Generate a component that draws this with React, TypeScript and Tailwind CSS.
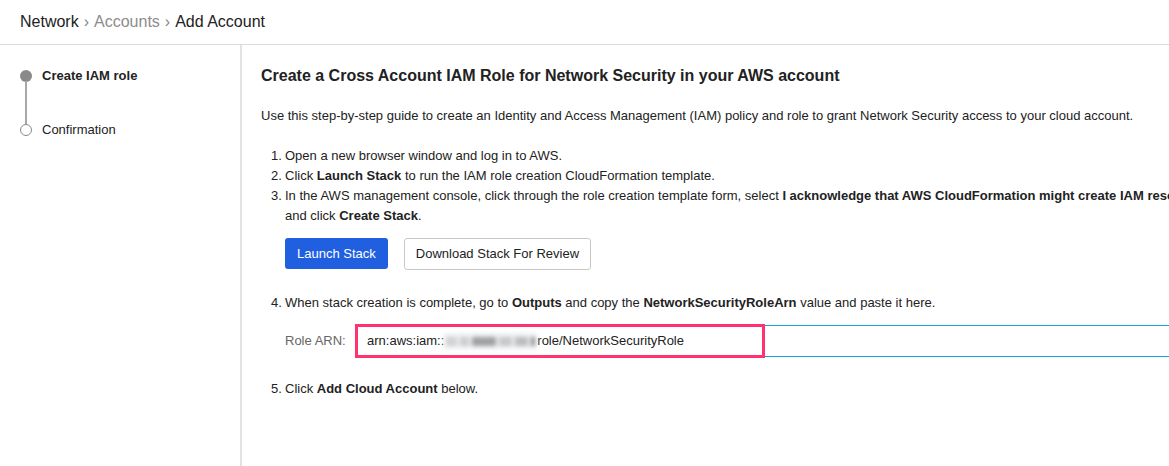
import React from 'react';

const FONT = { fontFamily: '"Liberation Sans", Arial, sans-serif' };

function Steps() {
  return (
    <div className="w-[242px] shrink-0 border-r-2 border-[#e2e2e2]">
      <div className="relative pl-[20px] pt-[25px]">
        {/* line between steps */}
        <div className="absolute left-[25px] top-[36px] w-[2px] h-[50px] bg-[#a8a8a8]" />
        <div className="flex items-center gap-[10px] h-[12px]">
          <span className="w-[12px] h-[12px] rounded-full bg-[#8a8a8a] shrink-0" />
          <span className="text-[13px] font-bold text-[#222]">Create IAM role</span>
        </div>
        <div className="flex items-center gap-[10px] h-[12px] mt-[42px]">
          <span className="w-[12px] h-[12px] rounded-full border-[1.5px] border-[#8a8a8a] bg-white shrink-0 relative z-10" />
          <span className="text-[13px] text-[#222]">Confirmation</span>
        </div>
      </div>
    </div>
  );
}

function Blurred() {
  return (
    <span className="inline-flex items-center w-[93px] h-[16px] align-middle bg-[#eef0f2] blur-[2px] gap-[3px] px-[2px]">
      <span className="h-[9px] w-[12px] bg-[#d2d2d2]" />
      <span className="h-[9px] w-[10px] bg-[#cdcdcd]" />
      <span className="h-[9px] w-[26px] bg-[#a0a0a0]" />
      <span className="h-[9px] w-[14px] bg-[#c8c8c8]" />
      <span className="h-[9px] w-[14px] bg-[#bcbcbc]" />
      <span className="h-[9px] w-[5px] bg-[#909090]" />
    </span>
  );
}

export default function App() {
  return (
    <div className="w-full h-screen overflow-hidden bg-white text-[#222]" style={FONT}>
      {/* breadcrumb */}
      <div className="h-[45px] border-b border-[#dcdcdc] flex items-center pl-[20px] text-[16px]">
        <span className="text-[#222]">Network</span>
        <span className="text-[#888] mx-[5px]">›</span>
        <span className="text-[#8c8c8c]">Accounts</span>
        <span className="text-[#888] mx-[5px]">›</span>
        <span className="text-[#222]">Add Account</span>
      </div>

      <div className="flex h-[421px]">
        <Steps />

        <div className="flex-1 pl-[19px] pt-[21px] min-w-0 text-[13px] leading-[20px]">
          <h1 className="text-[16px] font-bold leading-[20px] whitespace-nowrap">
            Create a Cross Account IAM Role for Network Security in your AWS account
          </h1>
          <p className="mt-[20px] whitespace-nowrap">
            Use this step-by-step guide to create an Identity and Access Management (IAM) policy and role to grant Network Security access to your cloud account.
          </p>

          <ol className="mt-[20px] pl-[10px]">
            <li className="flex">
              <span className="w-[14px] shrink-0">1.</span>
              <span>Open a new browser window and log in to AWS.</span>
            </li>
            <li className="flex">
              <span className="w-[14px] shrink-0">2.</span>
              <span>Click <b>Launch Stack</b> to run the IAM role creation CloudFormation template.</span>
            </li>
            <li className="flex">
              <span className="w-[14px] shrink-0">3.</span>
              <span className="whitespace-nowrap">
                In the AWS management console, click through the role creation template form, select <b>I acknowledge that AWS CloudFormation might create IAM resources.</b>
                <br />
                and click <b>Create Stack</b>.
              </span>
            </li>
          </ol>

          <div className="flex gap-[16px] mt-[12px] pl-[24px]">
            <button className="h-[31px] px-[12px] rounded-[3px] bg-[#1f5fe0] text-white text-[13px]">
              Launch Stack
            </button>
            <button className="h-[32px] px-[11px] rounded-[3px] border border-[#c8c8c8] bg-white text-[#222] text-[13px]">
              Download Stack For Review
            </button>
          </div>

          <div className="flex mt-[23px] pl-[10px]">
            <span className="w-[14px] shrink-0">4.</span>
            <span>When stack creation is complete, go to <b>Outputs</b> and copy the <b>NetworkSecurityRoleArn</b> value and paste it here.</span>
          </div>

          <div className="flex items-center mt-[12px] pl-[24px]">
            <span className="w-[71px] shrink-0 text-[#666]">Role ARN:</span>
            <div className="relative w-[900px] shrink-0">
              <div className="h-[32px] border-y border-[#1aa0d8] flex items-center pl-[11px] whitespace-nowrap">
                arn:aws:iam::<Blurred />role/NetworkSecurityRole
              </div>
              {/* highlight annotation */}
              <div className="absolute -left-[1px] -top-[1px] w-[410px] h-[34px] border-[3px] border-[#ff3370]" />
            </div>
          </div>

          <div className="flex mt-[22px] pl-[10px]">
            <span className="w-[14px] shrink-0">5.</span>
            <span>Click <b>Add Cloud Account</b> below.</span>
          </div>
        </div>
      </div>
    </div>
  );
}
